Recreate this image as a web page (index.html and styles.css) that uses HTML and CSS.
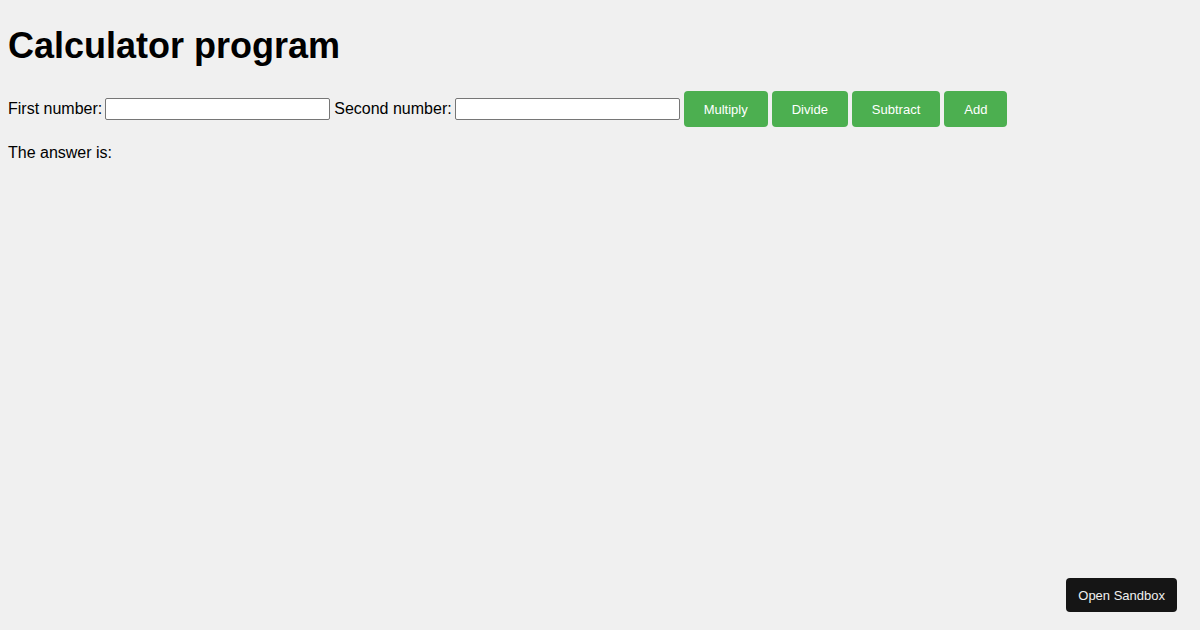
FILE: index.html
```html
<!DOCTYPE html>
<html lang="en">
<head>
<meta charset="utf-8">
<title>Calculator program</title>
<link rel="stylesheet" href="styles.css">
</head>
<body>
<h1 class="title">Calculator program</h1>
<div class="calc-row">
  <label class="field-label" for="n1">First number:</label>
  <input class="num-input" id="n1" type="text">
  <label class="field-label" for="n2">Second number:</label>
  <input class="num-input" id="n2" type="text">
  <button class="op-btn" type="button">Multiply</button>
  <button class="op-btn" type="button">Divide</button>
  <button class="op-btn" type="button">Subtract</button>
  <button class="op-btn" type="button">Add</button>
</div>
<p class="answer">The answer is:</p>
<button class="sandbox-btn" type="button">Open Sandbox</button>
</body>
</html>
```

FILE: styles.css
```css
html, body {
  background: #f0f0f0;
}
body {
  margin: 0;
  padding: 0 8px;
  font-family: "Liberation Sans", Arial, Helvetica, sans-serif;
  font-size: 16px;
  color: #000;
}
.title {
  margin: 25px 0 0;
  font-size: 36px;
  line-height: 41px;
  font-weight: bold;
}
.calc-row {
  margin-top: 25px;
  display: flex;
  align-items: center;
  gap: 3px;
  height: 36px;
}
.field-label {
  font-size: 16px;
  line-height: 18px;
}
.num-input {
  box-sizing: border-box;
  width: 225px;
  height: 22px;
  margin: 0 1px 0 0;
  padding: 1px 2px;
  border: 1px solid #767676;
  border-radius: 2px;
  background: #fff;
  font-family: "Liberation Sans", Arial, sans-serif;
  font-size: 13px;
}
.op-btn {
  height: 36px;
  margin: 0 1px 0 0;
  padding: 0 20px;
  border: none;
  border-radius: 4px;
  background: #4caf50;
  color: #fff;
  font-family: "Liberation Sans", Arial, sans-serif;
  font-size: 13px;
  cursor: pointer;
}
.answer {
  margin: 17px 0 0;
  line-height: 18px;
}
.sandbox-btn {
  position: fixed;
  right: 23px;
  bottom: 18px;
  height: 34px;
  padding: 0 12px;
  border: none;
  border-radius: 4px;
  background: #151515;
  color: #f0f0f0;
  font-family: "Liberation Sans", Arial, sans-serif;
  font-size: 13px;
}
```
